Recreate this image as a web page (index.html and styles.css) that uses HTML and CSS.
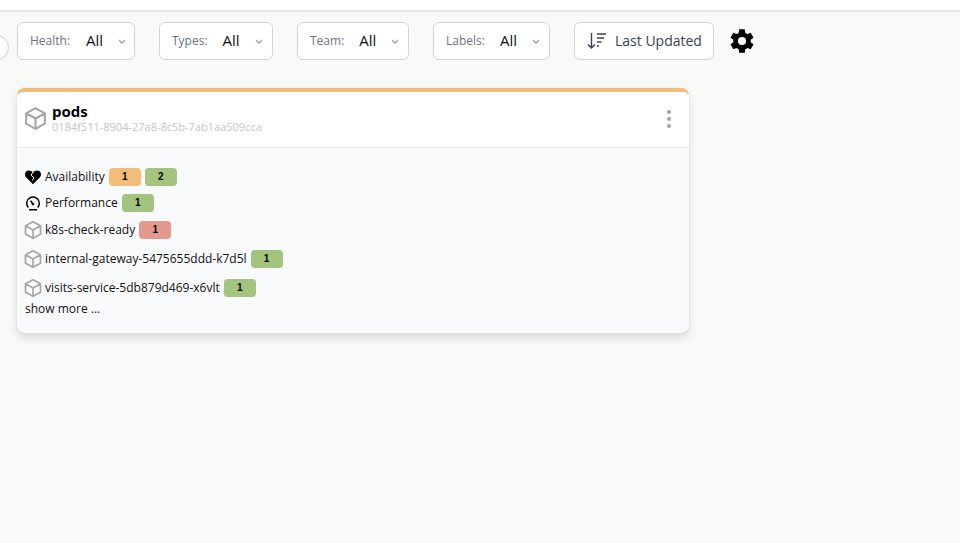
FILE: index.html
```html
<!DOCTYPE html>
<html lang="en">
<head>
<meta charset="utf-8">
<title>Topology</title>
<link rel="stylesheet" href="styles.css">
</head>
<body>
<svg class="defs" width="0" height="0" aria-hidden="true">
  <symbol id="cube" viewBox="0 0 24 24">
    <path d="M12 2 21 7v10l-9 5-9-5V7z M3 7l9 5 9-5 M12 12v10" fill="none" stroke="currentColor" stroke-width="2" stroke-linejoin="round"/>
  </symbol>
</svg>
<header class="topbar"></header>
<div class="toolbar">
  <span class="stub"></span>
  <div class="select s-health"><span class="lbl">Health:</span><span class="val">All</span><svg class="chev" viewBox="0 0 8 5"><path d="M1 1l3 3 3-3" fill="none" stroke="currentColor" stroke-width="1.3"/></svg></div>
  <div class="select s-types"><span class="lbl">Types:</span><span class="val">All</span><svg class="chev" viewBox="0 0 8 5"><path d="M1 1l3 3 3-3" fill="none" stroke="currentColor" stroke-width="1.3"/></svg></div>
  <div class="select s-team"><span class="lbl">Team:</span><span class="val">All</span><svg class="chev" viewBox="0 0 8 5"><path d="M1 1l3 3 3-3" fill="none" stroke="currentColor" stroke-width="1.3"/></svg></div>
  <div class="select s-labels"><span class="lbl">Labels:</span><span class="val">All</span><svg class="chev" viewBox="0 0 8 5"><path d="M1 1l3 3 3-3" fill="none" stroke="currentColor" stroke-width="1.3"/></svg></div>
  <button class="sort" type="button">
    <svg class="sort-ico" viewBox="0 0 20 18"><path d="M4.500 1v15M1 12.500l3.500 3.500 3.500-3.500" fill="none" stroke="currentColor" stroke-width="1.4"/><path d="M10 2h9M10 6h7M10 10h4.500M10 14h2" fill="none" stroke="currentColor" stroke-width="1.400"/></svg>
    <span class="sort-txt">Last Updated</span>
  </button>
  <svg class="gear" viewBox="0 0 24 24"><path fill-rule="evenodd" d="M19.430 12.980c.04-.32.07-.64.07-.98s-.03-.66-.07-.98l2.110-1.650c.19-.15.240-.42.120-.64l-2-3.460c-.12-.22-.39-.3-.61-.22l-2.490 1c-.52-.4-1.080-.73-1.690-.98l-.38-2.650A.49.49 0 0 0 14 2h-4c-.25 0-.46.180-.49.420l-.38 2.650c-.61.25-1.170.59-1.690.98l-2.490-1c-.23-.09-.49 0-.61.220l-2 3.460c-.13.220-.07.490.120.640l2.110 1.650c-.04.32-.07.650-.07.980s.03.660.07.980l-2.110 1.650c-.19.150-.24.420-.12.640l2 3.460c.12.220.39.300.61.220l2.490-1c.52.400 1.080.730 1.690.980l.38 2.650c.03.240.24.420.49.420h4c.25 0 .46-.180.49-.420l.38-2.650c.61-.25 1.170-.590 1.690-.980l2.490 1c.23.090.49 0 .61-.220l2-3.460c.12-.22.070-.49-.12-.64zM12 15.500a3.500 3.500 0 1 1 0-7 3.500 3.500 0 0 1 0 7z"/></svg>
</div>

<main class="content">
  <article class="card">
    <div class="card-head">
      <svg class="cube-lg"><use href="#cube"/></svg>
      <div class="titles">
        <div class="name">pods</div>
        <div class="uid">0184f511-8904-27a8-8c5b-7ab1aa509cca</div>
      </div>
      <div class="kebab"><i></i><i></i><i></i></div>
    </div>
    <div class="card-body">
      <div class="row r-avail">
        <svg class="ico" viewBox="0 0 16 16"><path d="M8 15.200 1.500 8.800C.4 7.600 0 6.400 0 5.200 0 3 1.700 1.400 3.900 1.400c1.700 0 3.100.7 4.100 2 1-1.300 2.400-2 4.100-2C14.300 1.400 16 3 16 5.200c0 1.200-.4 2.400-1.500 3.600z"/><path d="M8.400 2.800 6 6.200l3 2.500-1.800 3" fill="none" stroke="#f8f9fb" stroke-width="1"/></svg>
        <span class="txt">Availability</span>
        <span class="badge warn">1</span><span class="badge ok">2</span>
      </div>
      <div class="row r-perf">
        <svg class="ico" viewBox="0 0 16 16"><path d="M3.300 12.500A6.300 6.300 0 1 1 12.700 12.500" fill="none" stroke="#000" stroke-width="1.500"/><path d="M4 14.800h8" stroke="#000" stroke-width="1.500"/><path d="M8 9 5.600 5.800" stroke="#000" stroke-width="1.500"/><circle cx="8" cy="9" r="1.300"/></svg>
        <span class="txt">Performance</span>
        <span class="badge ok">1</span>
      </div>
      <div class="row r-k8s">
        <svg class="cube"><use href="#cube"/></svg>
        <span class="txt">k8s-check-ready</span>
        <span class="badge bad">1</span>
      </div>
      <div class="row r-gw">
        <svg class="cube"><use href="#cube"/></svg>
        <span class="txt">internal-gateway-5475655ddd-k7d5l</span>
        <span class="badge ok">1</span>
      </div>
      <div class="row r-vis">
        <svg class="cube"><use href="#cube"/></svg>
        <span class="txt">visits-service-5db879d469-x6vlt</span>
        <span class="badge ok">1</span>
      </div>
      <div class="more">show more ...</div>
    </div>
  </article>
</main>
</body>
</html>
```

FILE: styles.css
```css
* { box-sizing: border-box; }
html, body { height: 100%; }
body {
  margin: 0;
  background: #f9f9f7;
  font-family: "Open Sans", "Noto Sans", sans-serif;
  color: #000;
  overflow: hidden;
}
.defs { position: absolute; }
.topbar {
  height: 12px;
  background: #fff;
  border-bottom: 2px solid #e6e6e8;
}
.toolbar {
  position: relative;
  display: flex;
  align-items: center;
  gap: 24px;
  height: 38px;
  margin-top: 10px;
  padding-left: 17px;
}
.stub {
  position: absolute;
  left: -16px;
  top: 13px;
  width: 25px;
  height: 25px;
  background: #fff;
  border: 1px solid #cfd0d8;
  border-radius: 50%;
}
.select {
  display: flex;
  align-items: center;
  height: 38px;
  padding: 0 0 2px 12px;
  background: #fff;
  border: 1px solid #d2d3da;
  border-radius: 6px;
  position: relative;
}
.s-health { width: 118px; }
.s-types { width: 114px; }
.s-team { width: 112px; }
.s-labels { width: 117px; }
.lbl { font-size: 12px; color: #6b7280; margin-right: 15px; }
.s-health .lbl { margin-right: 16px; }
.val { font-size: 15px; color: #111; }
.chev {
  position: absolute;
  right: 9px;
  top: 16px;
  width: 8px;
  height: 5px;
  color: #9a9ca6;
}
.s-health .chev { right: 8px; }
.sort {
  display: flex;
  align-items: center;
  gap: 8px;
  width: 140px;
  height: 38px;
  padding: 0 0 0 12px;
  background: #fff;
  border: 1px solid #d2d3da;
  border-radius: 6px;
  font: 14px "Open Sans", "Noto Sans", sans-serif;
  color: #374151;
}
.sort-txt { margin-bottom: 2px; }
.sort-ico { width: 20px; height: 18px; color: #374151; }
.gear { width: 28px; height: 28px; margin-left: -10px; }
.content { padding: 28px 0 0 17px; }
.card {
  width: 672px;
  height: 245px;
  border-top: 4px solid #f3bd78;
  border-radius: 8px;
  background: #f9fafc;
  box-shadow: 0 5px 10px rgba(0,0,0,.12), 0 0 2px rgba(0,0,0,.1);
  overflow: hidden;
}
.card-head {
  display: flex;
  align-items: center;
  height: 56px;
  padding: 0 18px 0 7px;
  background: #fff;
  border-bottom: 1px solid #e5e7eb;
}
.cube-lg {
  width: 25px;
  height: 25px;
  color: #a6a6a6;
  margin: 0 4px 3px -1px;
  flex: none;
}
.titles { flex: 1; margin-bottom: 6px; }
.name { font-size: 15px; font-weight: 700; line-height: 20px; }
.uid { font-size: 11px; line-height: 12px; color: #c3c4c8; }
.kebab { display: flex; flex-direction: column; gap: 3px; margin-bottom: 2px; }
.kebab i { width: 4px; height: 4px; border-radius: 50%; background: #9ca3af; }
.card-body { padding-top: 16px; padding-left: 8px; }
.row { display: flex; align-items: center; height: 26px; }
.r-k8s { height: 27px; }
.r-gw { height: 31px; }
.r-vis { height: 27px; }
.r-avail .txt, .r-perf .txt { margin-bottom: 2px; }
.ico { width: 16px; height: 16px; margin-right: 4px; flex: none; }
.cube { width: 20px; height: 20px; margin: 0 2px 0 -2px; color: #a6a6a6; flex: none; }
.txt { font-size: 12px; color: #111; }
.badge {
  width: 32px;
  height: 18px;
  margin-left: 4px;
  border-radius: 4px;
  font-size: 10px;
  font-weight: 700;
  line-height: 18px;
  text-align: center;
  font-family: "Liberation Sans", sans-serif;
}
.warn { background: #f3bd78; }
.ok { background: #a3c47e; }
.bad { background: #e39a8d; }
.more { font-size: 12px; line-height: 16px; color: #111; }
```
